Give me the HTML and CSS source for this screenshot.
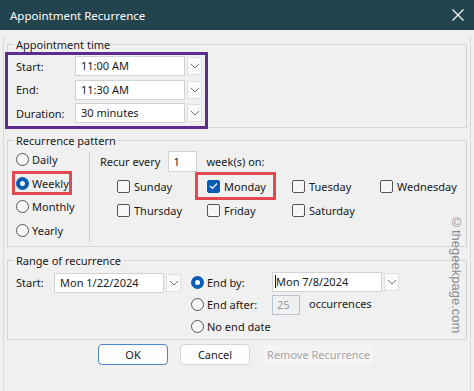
FILE: index.html
```html
<!DOCTYPE html>
<html lang="en">
<head>
    <meta charset="UTF-8">
    <title>Appointment Recurrence</title>
    <link rel="stylesheet" href="styles.css">
</head>
<body>
    <div class="window">
        <div class="titlebar">
            <span class="title">Appointment Recurrence</span>
            <svg class="close" width="12" height="12" viewBox="0 0 12 12"><path d="M0.5 0.5 L11.5 11.5 M11.5 0.5 L0.5 11.5" stroke="#fff" stroke-width="1.2" fill="none"/></svg>
        </div>
        <div class="content">
            <fieldset class="group group-time">
                <legend>Appointment time</legend>
                <div class="time-rows">
                    <span class="lbl">Start:</span>
                    <div class="combo"><span class="field w110">11:00 AM</span><span class="drop"><svg width="10" height="6" viewBox="0 0 10 6"><path d="M1 1 L5 5 L9 1" stroke="#777" fill="none"/></svg></span></div>
                    <span class="lbl">End:</span>
                    <div class="combo"><span class="field w110">11:30 AM</span><span class="drop"><svg width="10" height="6" viewBox="0 0 10 6"><path d="M1 1 L5 5 L9 1" stroke="#777" fill="none"/></svg></span></div>
                    <span class="lbl">Duration:</span>
                    <div class="combo"><span class="field w110">30 minutes</span><span class="drop"><svg width="10" height="6" viewBox="0 0 10 6"><path d="M1 1 L5 5 L9 1" stroke="#777" fill="none"/></svg></span></div>
                </div>
            </fieldset>

            <fieldset class="group group-pattern">
                <legend>Recurrence pattern</legend>
                <div class="pattern">
                    <div class="freq">
                        <div class="opt"><span class="radio"></span>Daily</div>
                        <div class="opt"><span class="radio on"></span>Weekly</div>
                        <div class="opt"><span class="radio"></span>Monthly</div>
                        <div class="opt"><span class="radio"></span>Yearly</div>
                    </div>
                    <div class="weekly">
                        <div class="recur-every">
                            <span>Recur every</span>
                            <span class="field num">1</span>
                            <span>week(s) on:</span>
                        </div>
                        <div class="days">
                            <div class="opt"><span class="check"></span>Sunday</div>
                            <div class="opt"><span class="check on"><svg width="9" height="8" viewBox="0 0 9 8"><path d="M1 4 L3.5 6.5 L8 1.5" stroke="#fff" stroke-width="1.2" fill="none"/></svg></span>Monday</div>
                            <div class="opt"><span class="check"></span>Tuesday</div>
                            <div class="opt"><span class="check"></span>Wednesday</div>
                            <div class="opt"><span class="check"></span>Thursday</div>
                            <div class="opt"><span class="check"></span>Friday</div>
                            <div class="opt"><span class="check"></span>Saturday</div>
                        </div>
                    </div>
                </div>
            </fieldset>

            <fieldset class="group group-range">
                <legend>Range of recurrence</legend>
                <div class="range">
                    <span class="lbl range-lbl">Start:</span>
                    <div class="combo range-start"><span class="field w110">Mon 1/22/2024</span><span class="drop"><svg width="10" height="6" viewBox="0 0 10 6"><path d="M1 1 L5 5 L9 1" stroke="#777" fill="none"/></svg></span></div>
                    <div class="ends">
                        <div class="end-row">
                            <div class="opt end-opt"><span class="radio on"></span>End by:</div>
                            <div class="combo"><span class="field w110 cursor">Mon 7/8/2024</span><span class="drop"><svg width="10" height="6" viewBox="0 0 10 6"><path d="M1 1 L5 5 L9 1" stroke="#777" fill="none"/></svg></span></div>
                        </div>
                        <div class="end-row">
                            <div class="opt end-opt"><span class="radio"></span>End after:</div>
                            <span class="field count">25</span>
                            <span class="occ">occurrences</span>
                        </div>
                        <div class="end-row">
                            <div class="opt"><span class="radio"></span>No end date</div>
                        </div>
                    </div>
                </div>
            </fieldset>

            <div class="buttons">
                <span class="btn default">OK</span>
                <span class="btn">Cancel</span>
                <span class="btn disabled">Remove Recurrence</span>
            </div>
        </div>

        <div class="mark purple"></div>
        <div class="mark red weekly-mark"></div>
        <div class="mark red monday-mark"></div>
        <div class="watermark">©thegeekpage.com</div>
    </div>
</body>
</html>
```

FILE: styles.css
```css
html, body {
    margin: 0;
    padding: 0;
    background: #f0f0f0;
}

.window {
    position: relative;
    width: 474px;
    height: 391px;
    overflow: hidden;
    font-family: "Noto Sans", "Open Sans", sans-serif;
    font-size: 11px;
    color: #1a1a1a;
    background: #f0f0f0;
}

.titlebar {
    height: 30px;
    background: #21444f;
    color: #fff;
    display: flex;
    align-items: center;
    justify-content: space-between;
    padding: 0 10px 0 10px;
}

.title { font-size: 11.5px; }

.titlebar .close { margin-right: 0; }

.content {
    margin: 0 3px;
    height: 358px;
    border: 1px solid #dadada;
    border-top: none;
    padding: 0 3px;
}

.group {
    margin: 0;
    border: 1px solid #d6d6d6;
    padding: 0 8px;
}

.group legend {
    padding: 0 2px;
    margin-left: -2px;
    line-height: 15px;
}

.group-time {
    margin-top: 7px;
    padding-top: 4px;
    padding-bottom: 4px;
}

.time-rows {
    display: grid;
    grid-template-columns: 59px auto;
    row-gap: 3.5px;
    align-items: center;
}

.combo {
    display: flex;
    align-items: center;
    gap: 2px;
}

.field {
    display: inline-block;
    box-sizing: border-box;
    height: 20px;
    line-height: 18px;
    padding: 0 5px;
    background: #fff;
    border: 1px solid #d2d2d2;
    white-space: nowrap;
}

.w110 { width: 110px; }

.drop {
    box-sizing: border-box;
    width: 15px;
    height: 18px;
    background: #fafafa;
    border: 1px solid #e0e0e0;
    display: flex;
    align-items: center;
    justify-content: center;
}

.group-pattern {
    margin-top: 5px;
    padding-bottom: 4px;
}

.pattern {
    display: flex;
}

.freq {
    width: 73px;
}

.opt {
    display: flex;
    align-items: center;
    white-space: nowrap;
}

.freq .opt { height: 23.5px; }

.radio {
    box-sizing: border-box;
    width: 13px;
    height: 13px;
    border-radius: 50%;
    border: 1px solid #555;
    background: #f7f7f7;
    margin-right: 3px;
    flex: none;
}

.radio.on {
    border: 4px solid #0a5cb0;
    background: #fff;
}

.weekly {
    flex: 1;
    border-left: 1px solid #d0d0d0;
    margin-top: 4px;
    padding-left: 10px;
}

.recur-every {
    display: flex;
    align-items: center;
    margin-top: -1px;
    height: 21px;
}

.recur-every .num {
    width: 29px;
    height: 21px;
    margin: 0 9px 0 8px;
    padding: 0 4px;
    line-height: 19px;
}

.days {
    display: grid;
    grid-template-columns: 90px 85px 88px 1fr;
    grid-auto-rows: 24px;
    align-items: center;
    margin: 2px 0 0 17px;
    padding-bottom: 11px;
}

.check {
    box-sizing: border-box;
    width: 13px;
    height: 13px;
    border-radius: 2px;
    border: 1px solid #555;
    background: #f7f7f7;
    margin-right: 4px;
    flex: none;
    display: flex;
    align-items: center;
    justify-content: center;
}

.check.on {
    background: #0a5cb0;
    border-color: #0a5cb0;
}

.group-range {
    margin-top: 6px;
    padding-top: 3px;
    padding-bottom: 2px;
}

.range {
    display: flex;
    align-items: flex-start;
}

.range-lbl {
    width: 38px;
    line-height: 20px;
    margin-top: 2px;
}

.range-start { margin-top: 2px; }

.ends {
    margin-left: 10px;
}

.end-row {
    display: flex;
    align-items: center;
    height: 22px;
}

.end-opt { width: 81px; }

.cursor { padding-left: 2px; }
.cursor::before {
    content: "";
    display: inline-block;
    width: 1px;
    height: 13px;
    background: #111;
    vertical-align: -2px;
}

.count {
    width: 28px;
    margin-top: 2px;
    background: #f0f0f0;
    border-color: #b4c4d4;
    color: #9a9a9a;
    padding: 0 4px;
}

.occ {
    margin-left: 9px;
    margin-top: -2px;
}

.buttons {
    display: flex;
    gap: 12px;
    margin-top: 4px;
    padding-left: 91px;
}

.btn {
    box-sizing: border-box;
    width: 70px;
    height: 21px;
    line-height: 19px;
    text-align: center;
    white-space: nowrap;
    background: #fdfdfd;
    border: 1px solid #d6d6d6;
    border-radius: 4px;
}

.btn.default { border-color: #4a86c8; }

.btn.disabled {
    width: 111px;
    margin-left: 1px;
    background: #f5f5f5;
    border-color: #f0f0f0;
    color: #a6a6a6;
}

.mark {
    position: absolute;
    box-sizing: border-box;
    border: 3px solid;
}

.purple {
    left: 5px;
    top: 52px;
    width: 203px;
    height: 77px;
    border-color: #5c2d8e;
}

.red { border-color: #e4484e; }

.weekly-mark {
    left: 12px;
    top: 171px;
    width: 60px;
    height: 24px;
}

.monday-mark {
    left: 195px;
    top: 172px;
    width: 81px;
    height: 28px;
}

.watermark {
    position: absolute;
    left: 449px;
    top: 215px;
    writing-mode: vertical-rl;
    font-family: "Liberation Sans", sans-serif;
    font-size: 13px;
    color: #8c8c8c;
}
```
